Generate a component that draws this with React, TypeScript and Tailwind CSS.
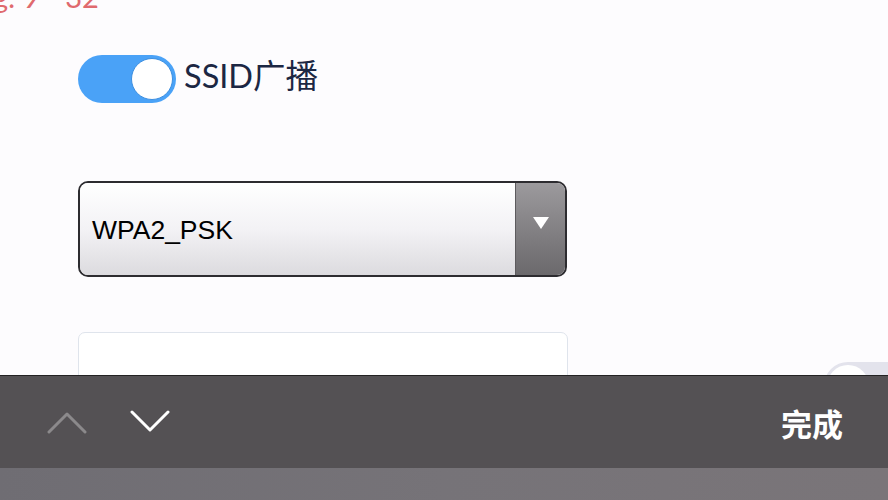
import React from 'react'

// 系统键盘工具栏（覆盖在页面之上）
function KeyboardBar() {
  return (
    <div className="fixed left-0 right-0 bottom-0 h-[125px] flex flex-col">
      <div className="h-[93px] bg-[#545154] border-t border-[#232223] flex items-center pl-[47px] pr-[45px]">
        <svg width="40" height="24" viewBox="0 0 40 24" className="mr-[43px]">
          <path d="M2 22 L20 4 L38 22" fill="none" stroke="#8b898b" strokeWidth="3" strokeLinecap="round" strokeLinejoin="round" />
        </svg>
        <svg width="40" height="24" viewBox="0 0 40 24">
          <path d="M2 2 L20 20 L38 2" fill="none" stroke="#ffffff" strokeWidth="3" strokeLinecap="round" strokeLinejoin="round" />
        </svg>
        <span className="ml-auto text-[31px] font-semibold text-white leading-none font-['Noto_Sans_CJK_SC',sans-serif]">完成</span>
      </div>
      <div className="flex-1 bg-gradient-to-r from-[#6f6d73] via-[#767378] to-[#7a7579]" />
    </div>
  )
}

export default function App() {
  return (
    <div className="relative w-[888px] h-[500px] overflow-hidden bg-[#fdfcfe] font-['Lato','Noto_Sans_CJK_SC',sans-serif]">
      {/* 提示文字（被顶部裁切） */}
      <p className="-mt-[19px] -ml-[7px] text-[29px] leading-[32px] text-[#e06a6e] font-['Lato',sans-serif]">g: 9 - 32</p>

      <div className="pl-[78px] flex flex-col">
        {/* SSID广播 */}
        <div className="mt-[42px] flex items-center gap-[8px]">
          <div className="w-[98px] h-[48px] rounded-full bg-[#4aa2f7] flex items-center justify-end pr-[3px]">
            <div className="w-[42px] h-[42px] rounded-full bg-white border border-[#3d8fe0]" />
          </div>
          <span className="text-[32.5px] font-normal leading-none text-[#1c2743] pb-[5px]">SSID广播</span>
        </div>

        {/* 加密方式 */}
        <div className="mt-[78px] w-[489px] h-[96px] rounded-[10px] border-2 border-[#2d2c30] overflow-hidden flex">
          <div className="flex-1 flex items-center pl-[12px] bg-gradient-to-b from-[#ffffff] via-[#f3f2f5] to-[#dcdbdf]">
            <span className="text-[26.5px] text-black font-['Liberation_Sans',sans-serif] pt-[3px]">WPA2_PSK</span>
          </div>
          <div className="w-[50px] flex justify-center pt-[33px] bg-gradient-to-b from-[#9c9a9d] to-[#6b696c] border-l border-[#5d5b5e]">
            <svg width="18" height="14" viewBox="0 0 18 14">
              <path d="M1 1 L17 1 L9 13 Z" fill="#ffffff" />
            </svg>
          </div>
        </div>

        {/* 密码输入框 */}
        <div className="mt-[55px] w-[490px] h-[80px] rounded-[7px] border-[1.5px] border-[#dfe4ec] bg-white" />
      </div>

      {/* 右侧被遮挡的开关 */}
      <div className="absolute left-[824px] top-[362px] w-[90px] h-[48px] rounded-full bg-[#e3e3ec]">
        <div className="absolute left-[3px] top-[3px] w-[42px] h-[42px] rounded-full bg-white" />
      </div>

      <KeyboardBar />
    </div>
  )
}
